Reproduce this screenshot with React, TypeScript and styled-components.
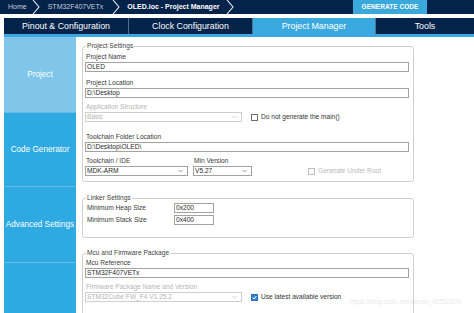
import React from "react";
import styled, { createGlobalStyle } from "styled-components";

const Global = createGlobalStyle`
  html, body { margin: 0; padding: 0; background: #fff; }
  body { font-family: "Liberation Sans", Arial, sans-serif; }
  * { box-sizing: border-box; }
`;

const Page = styled.div`
  width: 474px;
  height: 313px;
  overflow: hidden;
  position: relative;
  background: #fff;
  display: flex;
  flex-direction: column;
`;

const TopBar = styled.div`
  height: 14px;
  flex-shrink: 0;
  background: #03234b;
  display: flex;
  align-items: stretch;
`;

const Crumbs = styled.div`
  width: 353px;
  display: flex;
  align-items: center;
  padding-left: 8px;
`;

const Crumb = styled.span<{ $bold?: boolean; $ml?: number }>`
  margin-left: ${(p) => p.$ml ?? 0}px;
  font-size: 7px;
  line-height: 14px;
  white-space: nowrap;
  color: ${(p) => (p.$bold ? "#ffffff" : "#c3cdd9")};
  font-weight: ${(p) => (p.$bold ? 700 : 400)};
`;

const ChevronSvg = styled.svg<{ $ml: number }>`
  margin-left: ${(p) => p.$ml}px;
  flex-shrink: 0;
  display: block;
`;

const Chevron = ({ ml }: { ml: number }) => (
  <ChevronSvg $ml={ml} width="8" height="14" viewBox="0 0 8 14">
    <polyline points="1,0 7,7 1,14" fill="none" stroke="#e8eef5" strokeWidth="1.1" />
  </ChevronSvg>
);

const GenerateButton = styled.div`
  width: 74px;
  background: #39a9dc;
  color: #fff;
  font-weight: 700;
  font-size: 6.5px;
  line-height: 14px;
  text-align: center;
  letter-spacing: 0.05px;
`;

const Workspace = styled.div`
  margin-top: 4px;
  padding-left: 4px;
  flex: 1;
  display: flex;
  flex-direction: column;
  min-height: 0;
`;

const TabBar = styled.div`
  height: 16px;
  display: flex;
  flex-shrink: 0;
`;

const Tab = styled.div<{ $w?: number; $active?: boolean; $first?: boolean }>`
  ${(p) => (p.$w ? `width: ${p.$w}px;` : "flex: 1;")}
  background: ${(p) => (p.$active ? "#3aa9df" : "#03234b")};
  border-left: ${(p) => (p.$first ? "none" : "1px solid #51708f")};
  color: #fff;
  font-size: 8.8px;
  line-height: 16px;
  text-align: center;
  white-space: nowrap;
`;

const Strip = styled.div`
  height: 3px;
  flex-shrink: 0;
  background: #3aa9df;
`;

const Main = styled.div`
  flex: 1;
  display: flex;
  min-height: 0;
`;

const Sidebar = styled.div`
  width: 72px;
  flex-shrink: 0;
  display: flex;
  flex-direction: column;
`;

const SideItem = styled.div<{ $h: number; $active?: boolean; $grow?: boolean }>`
  height: ${(p) => p.$h}px;
  ${(p) => (p.$grow ? "flex: 1;" : "flex-shrink: 0;")}
  background: ${(p) => (p.$active ? "#7fc6ea" : "#2ea9e1")};
  border-top: ${(p) => (p.$active ? "none" : "1px solid #5fbde8")};
  color: #fff;
  font-size: 8.2px;
  display: flex;
  align-items: center;
  justify-content: center;
  white-space: nowrap;
`;

const Content = styled.div`
  flex: 1;
  padding-left: 6px;
  padding-top: 9px;
  display: flex;
  flex-direction: column;
`;

const Group = styled.div<{ $mt?: number; $pt: number; $pb: number }>`
  position: relative;
  width: 332px;
  flex-shrink: 0;
  margin-top: ${(p) => p.$mt ?? 0}px;
  border: 1px solid #cfcfcf;
  border-radius: 3px;
  padding: ${(p) => p.$pt}px 4px ${(p) => p.$pb}px 2px;
  display: flex;
  flex-direction: column;
`;

const Legend = styled.span`
  position: absolute;
  left: 3px;
  top: -5px;
  padding: 0 1px;
  background: #fff;
  font-size: 6.6px;
  line-height: 8px;
  color: #444;
`;

const Field = styled.div<{ $mt?: number }>`
  margin-top: ${(p) => p.$mt ?? 0}px;
  display: flex;
  flex-direction: column;
`;

const Label = styled.div<{ $disabled?: boolean }>`
  height: 8px;
  line-height: 8px;
  font-size: 6.6px;
  padding-left: 1px;
  color: ${(p) => (p.$disabled ? "#b5b5b5" : "#3a3a3a")};
  white-space: nowrap;
  margin-bottom: 1px;
`;

const TextBox = styled.div<{ $w?: number }>`
  height: 10px;
  width: ${(p) => (p.$w ? `${p.$w}px` : "100%")};
  border: 1px solid #a2a2a2;
  font-size: 6.6px;
  line-height: 8px;
  padding-left: 1px;
  color: #2a2a2a;
  white-space: nowrap;
  background: #fff;
`;

const SelectBox = styled.div<{ $w: number; $disabled?: boolean }>`
  height: 10px;
  width: ${(p) => p.$w}px;
  flex-shrink: 0;
  border: 1px solid ${(p) => (p.$disabled ? "#cfcfcf" : "#a2a2a2")};
  font-size: 6.6px;
  line-height: 8px;
  padding: 0 4px 0 1px;
  color: ${(p) => (p.$disabled ? "#b3b3b3" : "#2a2a2a")};
  background: #fff;
  display: flex;
  align-items: center;
  justify-content: space-between;
  white-space: nowrap;
`;

const Caret = ({ disabled }: { disabled?: boolean }) => (
  <svg width="5" height="4" viewBox="0 0 5 4">
    <polyline points="0.5,1 2.5,3 4.5,1" fill="none" stroke={disabled ? "#c4c4c4" : "#8a8a8a"} strokeWidth="0.8" />
  </svg>
);

const Select = ({ w, value, disabled }: { w: number; value: string; disabled?: boolean }) => (
  <SelectBox $w={w} $disabled={disabled}>
    <span>{value}</span>
    <Caret disabled={disabled} />
  </SelectBox>
);

const Row = styled.div<{ $gap?: number; $mt?: number }>`
  display: flex;
  align-items: center;
  gap: ${(p) => p.$gap ?? 0}px;
  margin-top: ${(p) => p.$mt ?? 0}px;
`;

const Column = styled.div<{ $w: number }>`
  width: ${(p) => p.$w}px;
  display: flex;
  flex-direction: column;
  flex-shrink: 0;
`;

const CheckWrap = styled.div<{ $ml: number; $disabled?: boolean; $bottom?: boolean }>`
  margin-left: ${(p) => p.$ml}px;
  display: flex;
  align-items: center;
  gap: 3px;
  font-size: 6.6px;
  line-height: 8px;
  color: ${(p) => (p.$disabled ? "#b8b8b8" : "#333")};
  white-space: nowrap;
  ${(p) => (p.$bottom ? "align-self: flex-end; margin-bottom: 1px;" : "")}
`;

const Box = styled.span<{ $checked?: boolean; $disabled?: boolean }>`
  width: 7px;
  height: 7px;
  flex-shrink: 0;
  border: 1px solid ${(p) => (p.$checked ? "#2f6fb8" : p.$disabled ? "#bdbdbd" : "#707070")};
  background: ${(p) => (p.$checked ? "#3584d6" : "#fff")};
  display: flex;
  align-items: center;
  justify-content: center;
`;

const Check = ({
  ml,
  label,
  checked,
  disabled,
  bottom,
}: {
  ml: number;
  label: string;
  checked?: boolean;
  disabled?: boolean;
  bottom?: boolean;
}) => (
  <CheckWrap $ml={ml} $disabled={disabled} $bottom={bottom}>
    <Box $checked={checked} $disabled={disabled}>
      {checked && (
        <svg width="5" height="5" viewBox="0 0 5 5">
          <polyline points="0.6,2.6 2,4 4.4,1" fill="none" stroke="#fff" strokeWidth="1" />
        </svg>
      )}
    </Box>
    <span>{label}</span>
  </CheckWrap>
);

const InlineLabel = styled.div`
  width: 89px;
  flex-shrink: 0;
  font-size: 6.6px;
  line-height: 11px;
  padding-left: 2px;
  color: #3a3a3a;
  white-space: nowrap;
`;

const LinkerRow = styled.div<{ $mt?: number }>`
  height: 11px;
  margin-top: ${(p) => p.$mt ?? 0}px;
  display: flex;
  align-items: center;
`;

const Watermark = styled.div`
  position: absolute;
  left: 350px;
  top: 298px;
  font-size: 6.5px;
  line-height: 8px;
  color: rgba(200, 200, 200, 0.45);
  white-space: nowrap;
`;

export default function App() {
  return (
    <Page>
      <Global />
      <TopBar>
        <Crumbs>
          <Crumb>Home</Crumb>
          <Chevron ml={5} />
          <Crumb $ml={8}>STM32F407VETx</Crumb>
          <Chevron ml={9} />
          <Crumb $bold $ml={7}>OLED.ioc - Project Manager</Crumb>
          <Chevron ml={6} />
        </Crumbs>
        <GenerateButton>GENERATE CODE</GenerateButton>
      </TopBar>
      <Workspace>
        <TabBar>
          <Tab $w={124} $first>Pinout &amp; Configuration</Tab>
          <Tab $w={124}>Clock Configuration</Tab>
          <Tab $w={123} $active>Project Manager</Tab>
          <Tab>Tools</Tab>
        </TabBar>
        <Strip />
        <Main>
          <Sidebar>
            <SideItem $h={75} $active>Project</SideItem>
            <SideItem $h={74}>Code Generator</SideItem>
            <SideItem $h={76}>Advanced Settings</SideItem>
            <SideItem $h={60} $grow />
          </Sidebar>
          <Content>
            <Group $pt={6} $pb={5}>
              <Legend>Project Settings</Legend>
              <Field>
                <Label>Project Name</Label>
                <TextBox>OLED</TextBox>
              </Field>
              <Field $mt={7}>
                <Label>Project Location</Label>
                <TextBox>D:\Desktop</TextBox>
              </Field>
              <Field $mt={5}>
                <Label $disabled>Application Structure</Label>
                <Row>
                  <Select w={157} value="Basic" disabled />
                  <Check ml={9} label="Do not generate the main()" />
                </Row>
              </Field>
              <Field $mt={11}>
                <Label>Toolchain Folder Location</Label>
                <TextBox>D:\Desktop\OLED\</TextBox>
              </Field>
              <Row $mt={5}>
                <Column $w={108}>
                  <Label>Toolchain / IDE</Label>
                  <Select w={103} value="MDK-ARM" />
                </Column>
                <Column $w={115}>
                  <Label>Min Version</Label>
                  <Select w={59} value="V5.27" />
                </Column>
                <Check ml={0} label="Generate Under Root" disabled bottom />
              </Row>
            </Group>

            <Group $mt={16} $pt={3} $pb={12}>
              <Legend>Linker Settings</Legend>
              <LinkerRow>
                <InlineLabel>Minimum Heap Size</InlineLabel>
                <TextBox $w={40}>0x200</TextBox>
              </LinkerRow>
              <LinkerRow $mt={1}>
                <InlineLabel>Minimum Stack Size</InlineLabel>
                <TextBox $w={40}>0x400</TextBox>
              </LinkerRow>
            </Group>

            <Group $mt={15} $pt={5} $pb={30}>
              <Legend>Mcu and Firmware Package</Legend>
              <Field>
                <Label>Mcu Reference</Label>
                <TextBox>STM32F407VETx</TextBox>
              </Field>
              <Field $mt={5}>
                <Label $disabled>Firmware Package Name and Version</Label>
                <Row>
                  <Select w={157} value="STM32Cube FW_F4 V1.25.2" disabled />
                  <Check ml={9} label="Use latest available version" checked />
                </Row>
              </Field>
            </Group>
          </Content>
        </Main>
      </Workspace>
      <Watermark>https://blog.csdn.net/weixin_45552209</Watermark>
    </Page>
  );
}
